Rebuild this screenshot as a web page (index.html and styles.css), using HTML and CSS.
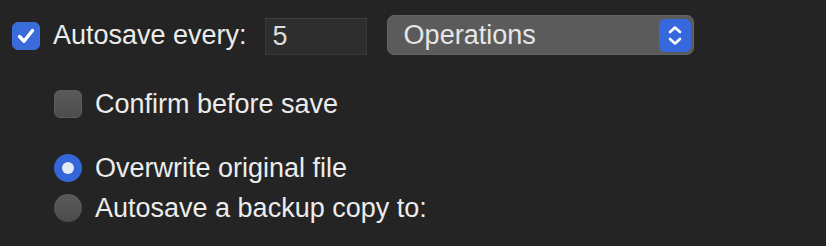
FILE: index.html
```html
<!DOCTYPE html>
<html>
<head>
<meta charset="utf-8">
<link rel="stylesheet" href="styles.css">
</head>
<body>
<div class="panel">
  <div class="row row-top">
    <span class="check checked">
      <svg viewBox="0 0 28 28" width="28" height="28"><path d="M7.5 14.5 L12 19.2 L20.5 8.5" fill="none" stroke="#fff" stroke-width="3.4" stroke-linecap="round" stroke-linejoin="round"/></svg>
    </span>
    <span class="label">Autosave every:</span>
    <span class="field">5</span>
    <span class="popup">
      <span class="popup-text">Operations</span>
      <span class="stepper">
        <svg viewBox="0 0 32 33" width="32" height="33"><path d="M11 13 L16 8.5 L21 13" fill="none" stroke="#fff" stroke-width="2.6" stroke-linecap="round" stroke-linejoin="round"/><path d="M11 20 L16 24.5 L21 20" fill="none" stroke="#fff" stroke-width="2.6" stroke-linecap="round" stroke-linejoin="round"/></svg>
      </span>
    </span>
  </div>
  <div class="row row-confirm indent">
    <span class="check"></span>
    <span class="label">Confirm before save</span>
  </div>
  <div class="radios indent">
    <div class="row">
      <span class="radio on"><span class="dot"></span></span>
      <span class="label">Overwrite original file</span>
    </div>
    <div class="row">
      <span class="radio"></span>
      <span class="label">Autosave a backup copy to:</span>
    </div>
  </div>
</div>
</body>
</html>
```
FILE: styles.css
```css
html, body {
  margin: 0;
  padding: 0;
  background: #242424;
  width: 826px;
  height: 246px;
  overflow: hidden;
}
.panel {
  font-family: "Liberation Sans", Arial, sans-serif;
  font-size: 27px;
  color: #ececec;
  padding: 15px 0 0 12px;
  display: flex;
  flex-direction: column;
}
.row {
  display: flex;
  align-items: center;
}
.row-top {
  height: 40px;
}
.indent {
  margin-left: 42px;
}
.row-confirm {
  margin-top: 35px;
  height: 28px;
}
.label {
  margin-left: 13px;
  white-space: nowrap;
  line-height: 28px;
}
.check {
  width: 28px;
  height: 28px;
  border-radius: 6px;
  box-sizing: border-box;
  background: linear-gradient(#5a5a5a, #4c4c4c);
  border: 1px solid #5c5c5c;
  flex: none;
  display: flex;
}
.check.checked {
  background: #3a6bdb;
  border-color: #3f6fdc;
  margin-top: 2px;
}
.check svg {
  margin: -1px;
}
.field {
  margin-left: 18px;
  width: 102px;
  height: 37px;
  box-sizing: border-box;
  background: #2d2d2d;
  border: 1px solid #3a3a3a;
  border-top-color: #404040;
  color: #dcdcdc;
  padding-left: 7px;
  line-height: 35px;
  margin-top: 2px;
}
.popup {
  margin-left: 20px;
  width: 307px;
  height: 40px;
  box-sizing: border-box;
  background: #5b5b5b;
  border-radius: 7px;
  border: 1px solid #626262;
  display: flex;
  align-items: center;
  justify-content: space-between;
  padding: 0 2px 0 16px;
  color: #e6e6e6;
}
.stepper {
  width: 32px;
  height: 33px;
  border-radius: 6px;
  background: #3468dc;
  display: flex;
  margin-top: 1px;
}
.radios {
  margin-top: 36px;
  display: flex;
  flex-direction: column;
  gap: 12px;
}
.radios .row {
  height: 28px;
}
.radio {
  width: 28px;
  height: 28px;
  border-radius: 50%;
  background: linear-gradient(#5a5a5a, #4b4b4b);
  flex: none;
  display: flex;
  align-items: center;
  justify-content: center;
}
.radio.on {
  background: #3466d8;
}
.dot {
  width: 12px;
  height: 12px;
  border-radius: 50%;
  background: #e4eaf8;
}
```
